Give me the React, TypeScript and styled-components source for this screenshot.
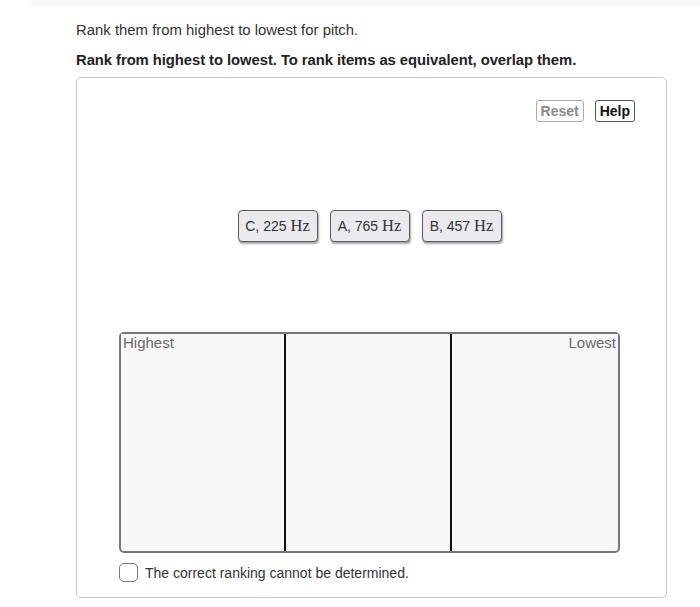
import React from 'react';
import styled, { createGlobalStyle } from 'styled-components';

const GlobalStyle = createGlobalStyle`
  body {
    margin: 0;
    background: #ffffff;
    font-family: "Liberation Sans", Arial, sans-serif;
    color: #333333;
  }
`;

const TopBand = styled.div`
  margin-left: 31px;
  height: 6px;
  background: #f6f6f6;
`;

const Page = styled.div`
  padding: 0 33px 0 76px;
`;

const Prompt = styled.p`
  margin: 15px 0 0;
  font-size: 14.9px;
  line-height: 18px;
`;

const Instruction = styled.p`
  margin: 12px 0 0;
  font-size: 14.8px;
  line-height: 18px;
  font-weight: bold;
  letter-spacing: -0.05px;
  color: #222222;
`;

const Card = styled.div`
  margin-top: 8px;
  height: 521px;
  box-sizing: border-box;
  border: 1px solid #c9c9c9;
  border-radius: 5px;
  padding: 22px 46px 0 42px;
  display: flex;
  flex-direction: column;
`;

const Toolbar = styled.div`
  display: flex;
  justify-content: flex-end;
  gap: 11px;
  margin-right: -15px;
`;

const ToolButton = styled.button<{ $muted?: boolean }>`
  height: 22px;
  padding: 0 4px;
  box-sizing: border-box;
  border: 1px solid ${p => (p.$muted ? '#a8a8a8' : '#555555')};
  border-radius: 3px;
  background: #ffffff;
  font-family: "Liberation Sans", Arial, sans-serif;
  font-size: 14px;
  font-weight: bold;
  color: ${p => (p.$muted ? '#8a8a8a' : '#111111')};
`;

const ItemRow = styled.div`
  margin-top: 88px;
  display: flex;
  justify-content: center;
  gap: 12px;
`;

const Item = styled.div`
  width: 80px;
  height: 32px;
  box-sizing: border-box;
  border: 1px solid #5a5a60;
  border-radius: 4px;
  background: #e9e9ee;
  box-shadow: 1px 2px 2px rgba(0, 0, 0, 0.35);
  display: flex;
  align-items: center;
  justify-content: center;
  font-size: 14px;
  color: #333333;
  white-space: nowrap;
`;

const Unit = styled.span`
  font-family: "Liberation Serif", "Times New Roman", serif;
  font-size: 16.5px;
  margin-left: 4px;
`;

const RankBox = styled.div`
  margin-top: 90px;
  height: 221px;
  box-sizing: border-box;
  border: 2px solid #77777d;
  border-radius: 5px;
  background: #f7f7f8;
  display: grid;
  grid-template-columns: 163px 166px 1fr;
`;

const Column = styled.div<{ $align: 'left' | 'right' }>`
  border-left: ${p => (p.$align === 'left' ? 'none' : '2px solid #111111')};
  display: flex;
  justify-content: ${p => (p.$align === 'left' ? 'flex-start' : 'flex-end')};
  align-items: flex-start;
`;

const EndLabel = styled.span`
  font-size: 15px;
  line-height: 18px;
  color: #6a6a6a;
  padding: 0 2px;
  background: #f7f7f8;
`;

const CheckRow = styled.label`
  margin-top: 10px;
  display: flex;
  align-items: center;
  gap: 7px;
  font-size: 14px;
  color: #333333;
`;

const CheckBox = styled.span`
  width: 19px;
  height: 19px;
  box-sizing: border-box;
  border: 1.5px solid #7a7a80;
  border-radius: 5px;
  background: #ffffff;
`;

const items = [
  { label: 'C, 225', unit: 'Hz' },
  { label: 'A, 765', unit: 'Hz' },
  { label: 'B, 457', unit: 'Hz' },
];

const App: React.FC = () => {
  return (
    <>
      <GlobalStyle />
      <TopBand />
      <Page>
        <Prompt>Rank them from highest to lowest for pitch.</Prompt>
        <Instruction>Rank from highest to lowest. To rank items as equivalent, overlap them.</Instruction>
        <Card>
          <Toolbar>
            <ToolButton $muted>Reset</ToolButton>
            <ToolButton>Help</ToolButton>
          </Toolbar>
          <ItemRow>
            {items.map(it => (
              <Item key={it.label}>
                {it.label}
                <Unit>{it.unit}</Unit>
              </Item>
            ))}
          </ItemRow>
          <RankBox>
            <Column $align="left">
              <EndLabel>Highest</EndLabel>
            </Column>
            <Column $align="right" />
            <Column $align="right">
              <EndLabel>Lowest</EndLabel>
            </Column>
          </RankBox>
          <CheckRow>
            <CheckBox />
            The correct ranking cannot be determined.
          </CheckRow>
        </Card>
      </Page>
    </>
  );
};

export default App;
